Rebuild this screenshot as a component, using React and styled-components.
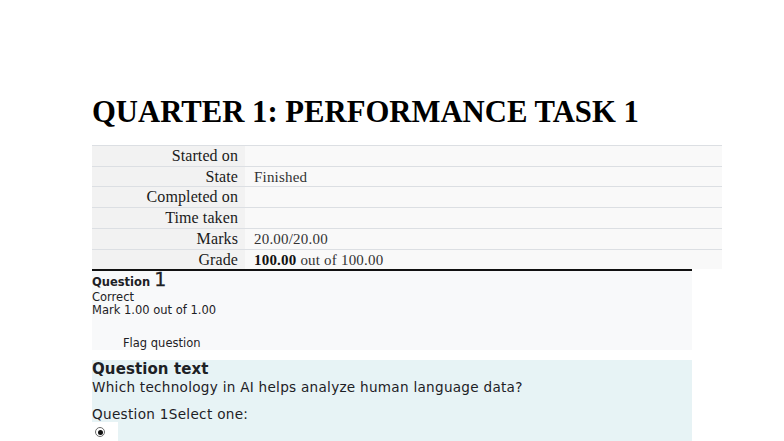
import React from "react";
import styled, { createGlobalStyle } from "styled-components";

const Global = createGlobalStyle`
  html, body { margin: 0; padding: 0; background: #ffffff; }
  body { font-family: "DejaVu Sans", sans-serif; color: #1d2125; }
`;

const Page = styled.main`
  padding: 94px 0 0 92px;
  width: 630px;
`;

const Title = styled.h2`
  margin: 0 0 15px;
  font-family: "Liberation Serif", "Times New Roman", serif;
  font-weight: bold;
  font-size: 30.7px;
  line-height: 36px;
  color: #000;
  white-space: nowrap;
`;

const Summary = styled.table`
  width: 630px;
  border-collapse: collapse;
  font-family: "Liberation Serif", "Times New Roman", serif;
  font-size: 15px;
`;

const Row = styled.tr`
  border-top: 1px solid #dcdfe3;
`;

const Label = styled.th`
  width: 153px;
  height: 19.7px;
  padding: 1px 7px 0 0;
  box-sizing: border-box;
  text-align: right;
  font-weight: normal;
  font-size: 16px;
  letter-spacing: 0.1px;
  color: #1a1a1a;
  background: #f2f2f2;
  white-space: nowrap;
  line-height: 18.7px;
`;

const Value = styled.td`
  padding: 1px 0 0 9px;
  color: #333;
  background: #f9f9f9;
  line-height: 18.7px;
  letter-spacing: 0.2px;
  white-space: nowrap;
  b { color: #111; }
`;

const Info = styled.section`
  width: 600px;
  height: 79px;
  border-top: 2px solid #111;
  background: #f8f9fa;
  font-size: 11.5px;
  color: #1d2125;
  display: flex;
  flex-direction: column;
`;

const QNo = styled.h3`
  margin: 0;
  font-size: 11.5px;
  font-weight: bold;
  line-height: 17px;
  span { font-size: 19px; font-weight: normal; -webkit-text-stroke: 0.3px #1d2125; }
`;

const InfoLine = styled.div`
  line-height: 13px;
`;

const Flag = styled.div`
  margin-top: 19.5px;
  padding-left: 31px;
  line-height: 13px;
`;

const Formulation = styled.section`
  margin-top: 10px;
  width: 600px;
  background: #e7f3f5;
  color: #1d2125;
  padding-bottom: 40px;
`;

const QHead = styled.h4`
  margin: 0;
  width: 602px;
  font-size: 15px;
  font-weight: bold;
  line-height: 18px;
  letter-spacing: 0.1px;
`;

const QText = styled.p`
  margin: 0;
  font-size: 13.6px;
  line-height: 18px;
  letter-spacing: 0.27px;
`;

const Prompt = styled.div`
  margin-top: 10px;
  font-size: 13.6px;
  line-height: 16px;
  letter-spacing: 0.3px;
`;

const AnswerBox = styled.div`
  width: 26px;
  height: 24px;
  background: #ffffff;
  display: flex;
  align-items: flex-start;
  padding: 5px 0 0 3px;
  box-sizing: border-box;
`;

const Radio = styled.span`
  width: 10px;
  height: 10px;
  border-radius: 50%;
  border: 1px solid #6b6b6b;
  background: #fff;
  box-sizing: border-box;
  display: flex;
  align-items: center;
  justify-content: center;
  &::after {
    content: "";
    width: 5px;
    height: 5px;
    border-radius: 50%;
    background: #111;
  }
`;

const rows = [
  ["Started on", ""],
  ["State", "Finished"],
  ["Completed on", ""],
  ["Time taken", ""],
  ["Marks", "20.00/20.00"],
  ["Grade", <><b>100.00</b> out of 100.00</>],
];

export default function App() {
  return (
    <>
      <Global />
      <Page>
        <Title>QUARTER 1: PERFORMANCE TASK 1</Title>
        <Summary>
          <tbody>
            {rows.map(([l, v]) => (
              <Row key={l}>
                <Label scope="row">{l}</Label>
                <Value>{v}</Value>
              </Row>
            ))}
          </tbody>
        </Summary>
        <Info>
          <QNo>
            Question <span>1</span>
          </QNo>
          <InfoLine>Correct</InfoLine>
          <InfoLine>Mark 1.00 out of 1.00</InfoLine>
          <Flag>Flag question</Flag>
        </Info>
        <Formulation>
          <QHead>Question text</QHead>
          <QText>Which technology in AI helps analyze human language data?</QText>
          <Prompt>Question 1Select one:</Prompt>
          <AnswerBox>
            <Radio />
          </AnswerBox>
        </Formulation>
      </Page>
    </>
  );
}
